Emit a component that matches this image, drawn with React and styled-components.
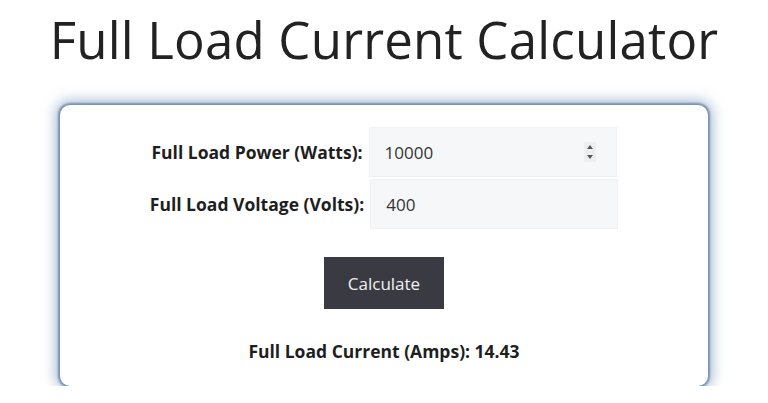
import React, { useState } from "react";
import styled, { createGlobalStyle } from "styled-components";

const GlobalStyle = createGlobalStyle`
  body {
    margin: 0;
    background: #ffffff;
    font-family: "Open Sans", "Noto Sans", sans-serif;
    color: #222;
  }
`;

function Calculator() {
  const [power, setPower] = useState("10000");
  const [voltage, setVoltage] = useState("400");
  const [current, setCurrent] = useState("14.43");

  const calculate = () => {
    const p = parseFloat(power);
    const v = parseFloat(voltage);
    if (!p || !v) return;
    setCurrent((p / (Math.sqrt(3) * v)).toFixed(2));
  };

  return (
    <Page>
      <GlobalStyle />
      <Title>Full Load Current Calculator</Title>
      <Card>
        <Row>
          <Label>Full Load Power (Watts):</Label>
          <Field>
            <Input value={power} onChange={(e) => setPower(e.target.value)} />
            <Spinner>
              <Arrow up />
              <Arrow />
            </Spinner>
          </Field>
        </Row>
        <Row>
          <Label>Full Load Voltage (Volts):</Label>
          <Field>
            <Input value={voltage} onChange={(e) => setVoltage(e.target.value)} />
          </Field>
        </Row>
        <Button onClick={calculate}>Calculate</Button>
        <Result>Full Load Current (Amps): {current}</Result>
      </Card>
    </Page>
  );
}

const Page = styled.div`
  display: flex;
  flex-direction: column;
  align-items: center;
  padding-top: 4px;
`;

const Title = styled.h1`
  margin: 0;
  font-weight: 400;
  font-size: 51px;
  line-height: 70px;
  color: #222;
  letter-spacing: 0.2px;
`;

const Card = styled.div`
  margin-top: 31px;
  width: 648px;
  height: 281px;
  box-sizing: border-box;
  background: #fff;
  border-radius: 10px;
  box-shadow: 0 0 2px 2px rgba(105, 135, 175, 0.85),
    0 0 14px 4px rgba(105, 135, 178, 0.6);
  display: flex;
  flex-direction: column;
  align-items: center;
  padding-top: 22px;
`;

const Row = styled.div`
  display: flex;
  align-items: center;
  gap: 6px;
  margin-bottom: 2px;
`;

const Label = styled.label`
  font-weight: 700;
  font-size: 17.5px;
  color: #1e1e1e;
`;

const Field = styled.div`
  display: flex;
  align-items: center;
  width: 248px;
  height: 50px;
  background: #f6f7f9;
  box-sizing: border-box;
  border: 1px solid #eff1f3;
  padding: 0 20px 0 15px;
`;

const Input = styled.input`
  flex: 1;
  min-width: 0;
  border: none;
  outline: none;
  background: transparent;
  font-family: "Open Sans", "Noto Sans", sans-serif;
  font-size: 17px;
  color: #333;
  padding: 0;
`;

const Spinner = styled.div`
  display: flex;
  flex-direction: column;
  align-items: center;
  gap: 6px;
  width: 12px;
  padding: 3px 0;
  background: #eceef1;
`;

const Arrow = styled.span`
  width: 0;
  height: 0;
  border-left: 3px solid transparent;
  border-right: 3px solid transparent;
  ${(p) =>
    p.up
      ? "border-bottom: 4px solid #555;"
      : "border-top: 4px solid #555;"}
`;

const Button = styled.button`
  margin-top: 26px;
  width: 120px;
  height: 52px;
  border: none;
  background: #3a3a42;
  color: #f2f2f2;
  font-family: "Open Sans", "Noto Sans", sans-serif;
  font-size: 17px;
  cursor: pointer;
`;

const Result = styled.p`
  margin: 30px 0 0;
  font-weight: 700;
  font-size: 17.5px;
  color: #1e1e1e;
`;

export default function App() {
  return <Calculator />;
}
